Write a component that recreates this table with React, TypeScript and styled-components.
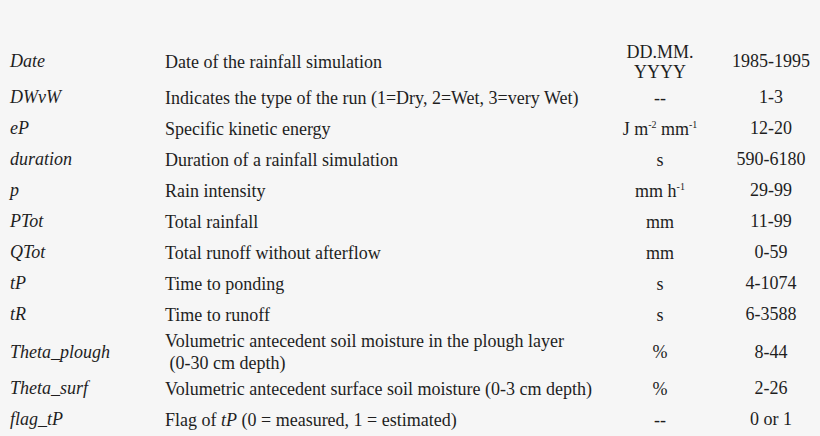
import React from 'react';
import styled, { createGlobalStyle } from 'styled-components';

const GlobalStyles = createGlobalStyle`
  html, body {
    margin: 0;
    padding: 0;
    background: #f6f6f6;
    overflow: hidden;
  }
`;

const Page = styled.div`
  width: 820px;
  height: 436px;
  padding: 41px 0 0 10px;
  box-sizing: border-box;
  font-family: 'Liberation Serif', 'Times New Roman', serif;
  font-size: 18px;
  color: #1e1e1e;
`;

const Row = styled.div<{ $h: number }>`
  display: grid;
  grid-template-columns: 155px 440px 110px 112px;
  align-items: center;
  height: ${(p) => p.$h}px;
`;

const Symbol = styled.div`
  font-style: italic;
`;

const Desc = styled.div`
  line-height: 22px;
`;

const Unit = styled.div`
  text-align: center;
  line-height: 20px;
`;

const Range = styled.div`
  text-align: center;
`;

const Sup = styled.sup`
  font-size: 10px;
  vertical-align: 7px;
  line-height: 0;
`;

interface Item {
  symbol: string;
  desc: React.ReactNode;
  unit: React.ReactNode;
  range: string;
  h?: number;
}

const items: Item[] = [
  {
    symbol: 'Date',
    desc: 'Date of the rainfall simulation',
    unit: (
      <>
        DD.MM.
        <br />
        YYYY
      </>
    ),
    range: '1985-1995',
    h: 41,
  },
  { symbol: 'DWvW', desc: 'Indicates the type of the run (1=Dry, 2=Wet, 3=very Wet)', unit: '--', range: '1-3' },
  {
    symbol: 'eP',
    desc: 'Specific kinetic energy',
    unit: (
      <>
        J m<Sup>-2</Sup> mm<Sup>-1</Sup>
      </>
    ),
    range: '12-20',
  },
  { symbol: 'duration', desc: 'Duration of a rainfall simulation', unit: 's', range: '590-6180' },
  {
    symbol: 'p',
    desc: 'Rain intensity',
    unit: (
      <>
        mm h<Sup>-1</Sup>
      </>
    ),
    range: '29-99',
  },
  { symbol: 'PTot', desc: 'Total rainfall', unit: 'mm', range: '11-99' },
  { symbol: 'QTot', desc: 'Total runoff without afterflow', unit: 'mm', range: '0-59' },
  { symbol: 'tP', desc: 'Time to ponding', unit: 's', range: '4-1074' },
  { symbol: 'tR', desc: 'Time to runoff', unit: 's', range: '6-3588' },
  {
    symbol: 'Theta_plough',
    desc: (
      <>
        Volumetric antecedent soil moisture in the plough layer
        <br />
        &nbsp;(0-30 cm depth)
      </>
    ),
    unit: '%',
    range: '8-44',
    h: 43,
  },
  {
    symbol: 'Theta_surf',
    desc: 'Volumetric antecedent surface soil moisture (0-3 cm depth)',
    unit: '%',
    range: '2-26',
  },
  {
    symbol: 'flag_tP',
    desc: (
      <>
        Flag of <i>tP</i> (0 = measured, 1 = estimated)
      </>
    ),
    unit: '--',
    range: '0 or 1',
  },
];

const App: React.FC = () => {
  return (
    <>
      <GlobalStyles />
      <Page>
        {items.map((it) => (
          <Row key={it.symbol} $h={it.h ?? 31}>
            <Symbol>{it.symbol}</Symbol>
            <Desc>{it.desc}</Desc>
            <Unit>{it.unit}</Unit>
            <Range>{it.range}</Range>
          </Row>
        ))}
      </Page>
    </>
  );
};

export default App;
